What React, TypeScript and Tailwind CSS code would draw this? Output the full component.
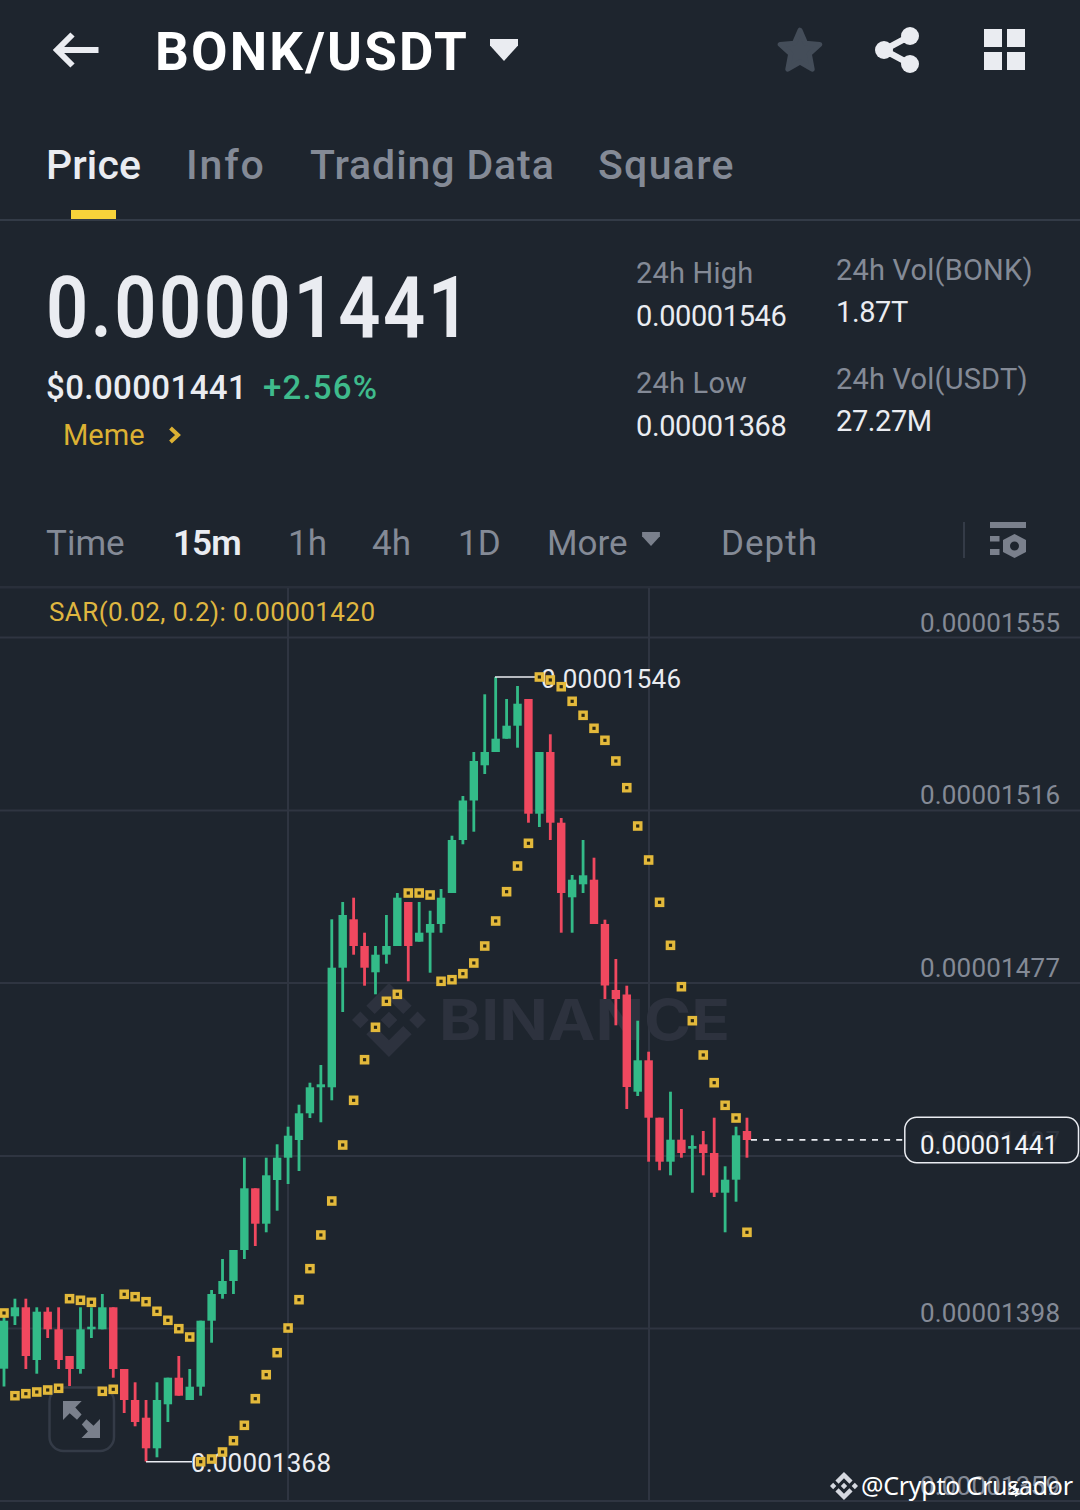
import React, { useState } from 'react'
import { SiBinance } from 'react-icons/si'
import clsx from 'clsx'

interface Candle {
  up: boolean
  high: number
  top: number
  bottom: number
  low: number
}

const UP = '#33bb88'
const DOWN = '#f0485f'
const FIRST_X = 4
const STEP = 10.926

// direction, wick top, body top, body bottom, wick bottom
const rawCandles: [number, number, number, number, number][] = [
  [1, 1316, 1320.7, 1368.7, 1386.5],
  [1, 1298.7, 1307.3, 1316.3, 1325],
  [0, 1298.7, 1307.3, 1356, 1369],
  [1, 1307.3, 1311.7, 1360, 1373.7],
  [0, 1307.3, 1311.7, 1329.3, 1338],
  [0, 1307.3, 1329.3, 1360, 1369],
  [0, 1356, 1356, 1369, 1386],
  [1, 1307.3, 1329.3, 1369, 1373.7],
  [1, 1307.3, 1326.7, 1329.3, 1338],
  [1, 1294, 1307.3, 1329.3, 1329.3],
  [0, 1307.3, 1307.3, 1369, 1377.7],
  [0, 1369, 1369, 1400, 1413],
  [0, 1382.3, 1400, 1422, 1426.3],
  [0, 1400, 1417.7, 1448.3, 1461.5],
  [1, 1382.3, 1400, 1448.3, 1457.3],
  [1, 1377.7, 1377.7, 1404.3, 1422],
  [0, 1356, 1377.7, 1395.7, 1395.7],
  [1, 1369, 1386.7, 1400, 1400],
  [1, 1320.7, 1320.7, 1386.7, 1395.7],
  [1, 1290, 1294, 1320.7, 1342.7],
  [1, 1259, 1281, 1294, 1298.7],
  [1, 1250, 1250, 1281, 1294],
  [1, 1157.7, 1188.3, 1250, 1259],
  [0, 1188.3, 1188.3, 1223.7, 1246],
  [1, 1157.7, 1175.3, 1223.7, 1232.3],
  [1, 1144.3, 1157.7, 1180, 1210.7],
  [1, 1126.7, 1135.7, 1157.7, 1184],
  [1, 1104.7, 1113.3, 1140, 1171],
  [1, 1082.7, 1087.3, 1113.3, 1118],
  [1, 1065, 1084.3, 1087.3, 1122.3],
  [1, 919.3, 967.7, 1087.3, 1100.3],
  [1, 902, 915, 967.7, 1012],
  [0, 897.7, 919.3, 946, 954.7],
  [0, 932.7, 946, 967.7, 985.7],
  [1, 946, 954.7, 972.3, 994.3],
  [1, 915, 946, 954.7, 963.7],
  [1, 893, 897.7, 946, 946],
  [0, 902, 902, 946, 981.3],
  [1, 902, 932.7, 941.7, 941.7],
  [1, 910.7, 924, 932.7, 972.7],
  [1, 889, 897.7, 924, 932.7],
  [1, 835.7, 840, 893, 893],
  [1, 796, 800.5, 840, 844.3],
  [1, 752, 761, 800.5, 831.7],
  [1, 694.3, 752, 765.3, 774],
  [1, 677, 738.7, 752, 752],
  [1, 699, 725.7, 738.7, 738.7],
  [1, 686, 703.7, 725.7, 747.7],
  [0, 699, 699, 813.7, 822.7],
  [1, 752, 752, 813.7, 827],
  [0, 734.3, 752, 822.7, 840],
  [0, 818, 822.7, 893, 932.7],
  [1, 875, 879.7, 897.3, 932.7],
  [1, 840, 875.3, 884.3, 893],
  [0, 857.7, 879.7, 924, 924],
  [0, 919.7, 924, 985.5, 999],
  [0, 959, 990, 999, 1025.3],
  [0, 985.7, 994.5, 1087, 1109],
  [1, 1020.7, 1060.3, 1091.7, 1096],
  [0, 1051.7, 1060.3, 1117.7, 1161.7],
  [0, 1117.7, 1117.7, 1161.7, 1170.3],
  [1, 1091.7, 1139.7, 1161.7, 1175.3],
  [0, 1109, 1139.7, 1153, 1157.7],
  [1, 1135.3, 1146, 1148.7, 1192.7],
  [0, 1131, 1144.3, 1153, 1175.3],
  [0, 1117.7, 1153, 1192.7, 1197],
  [1, 1166.3, 1179.7, 1192.7, 1232.3],
  [1, 1126.7, 1135.3, 1179.7, 1201.7],
  [0, 1117.7, 1131, 1140, 1157.7]
]

const candles: Candle[] = rawCandles.map(([up, high, top, bottom, low]) => ({ up: up === 1, high, top, bottom, low }))

const sar = [
  1313, 1395.7, 1393.7, 1392, 1390, 1388.3, 1298.7, 1300.3, 1302.3, 1391.3, 1389.3, 1294.3, 1296.7, 1301.7, 1311.3,
  1320.3, 1328.7, 1337, 1461.7, 1459, 1452, 1440.7, 1425.3, 1398.7, 1374.7, 1352.7, 1328, 1299.7, 1268.7, 1235, 1201,
  1145, 1100.3, 1059.7, 1027.3, 1001.3, 994.3, 893, 893, 895, 981.3, 979.7, 973.7, 963, 946, 921, 891.7, 866, 843.3,
  677, 680, 686.7, 701.3, 715.3, 728.3, 740.3, 761, 787.7, 826, 860, 902.3, 945.3, 986.7, 1020.7, 1055, 1082.7,
  1105.3, 1118, 1232.3
]

const gridRows = [637.5, 810.5, 983, 1156, 1328.5, 1501]
const gridColumns = [288, 649]

const axisLabels = [
  { text: '0.00001555', y: 632 },
  { text: '0.00001516', y: 804 },
  { text: '0.00001477', y: 977 },
  { text: '0.00001398', y: 1322 },
  { text: '0.00001359', y: 1494.5 }
]

const tabs = [
  { name: 'Price', width: 'w-[94px]', tracking: 'tracking-[0.1px]' },
  { name: 'Info', width: 'w-[78px]', tracking: 'tracking-[1.9px]' },
  { name: 'Trading Data', width: 'w-[242px]', tracking: 'tracking-[0.9px]' },
  { name: 'Square', width: 'w-[136px]', tracking: 'tracking-[1.3px]' }
]

const intervals = [
  { name: 'Time', width: 'w-[127px]' },
  { name: '15m', width: 'w-[115px]' },
  { name: '1h', width: 'w-[84px]' },
  { name: '4h', width: 'w-[86px]' },
  { name: '1D', width: 'w-[89px]' }
]

const Caret: React.FC<{ className?: string }> = ({ className }) => (
  <svg viewBox="0 0 28 22" className={className} fill="currentColor">
    <path d="M0 0H28V6.5L14 22L0 6.5Z" />
  </svg>
)

const Header: React.FC = () => (
  <header className="flex h-[99px] items-center pl-[52px] pr-[55px]">
    <svg viewBox="0 0 48 36" className="h-9 w-12" fill="none" stroke="#eaecf1" strokeWidth="6">
      <path d="M20.5 2.5L5 18L20.5 33.5M4 18H46.5" />
    </svg>
    <h1 className="ml-[55px] w-[335px] pt-[5px] text-[53px] leading-[60px] font-bold tracking-[2.2px] whitespace-nowrap text-white">
      BONK/USDT
    </h1>
    <Caret className="h-[22px] w-7 shrink-0 text-[#eaecf1]" />
    <div className="ml-auto flex items-center">
      <svg viewBox="0 0 46 48" className="h-12 w-[46px]" fill="#444d59" stroke="#444d59" strokeWidth="5" strokeLinejoin="round">
        <path d="M23 4.2L28.6 17.2L42.8 18.4L32.3 27.8L35.2 43.2L23 36L10.8 43.2L13.7 27.8L3.2 18.4L17.4 17.2Z" />
      </svg>
      <svg viewBox="0 0 44 48" className="ml-[52px] h-12 w-11" fill="#eaecf1">
        <path d="M35 10L9 24L35 38" fill="none" stroke="#eaecf1" strokeWidth="6.5" />
        <circle cx="35" cy="10" r="9" />
        <circle cx="9" cy="24" r="9" />
        <circle cx="35" cy="38" r="9" />
      </svg>
      <div className="ml-[65px] grid grid-cols-2 gap-[5px]">
        {[0, 1, 2, 3].map((n) => (
          <span key={n} className="h-[18px] w-[18px] bg-[#eaecf1]" />
        ))}
      </div>
    </div>
  </header>
)

const Stat: React.FC<{ label: string; value: string; className: string }> = ({ label, value, className }) => (
  <div className={clsx('text-[29px] whitespace-nowrap', className)}>
    <div className="tracking-[0.2px] text-[#848a96]">{label}</div>
    <div className="tracking-[-0.4px] text-[#eaecf1]">{value}</div>
  </div>
)

const Summary: React.FC = () => (
  <section className="flex h-[279px] pl-[46px]">
    <div className="w-[590px] pt-[45px]">
      <div className="origin-left scale-x-[0.87] text-[85px] leading-[84px] font-semibold tracking-[2.9px] text-[#eaecf1]">
        0.00001441
      </div>
      <div className="mt-[18px] flex text-[33px] leading-10 font-medium">
        <span className="w-[217px] tracking-[0.4px] text-[#eaecf1]">$0.00001441</span>
        <span className="tracking-[1.2px] text-[#3fbb8c]">+2.56%</span>
      </div>
      <div className="mt-[11px] flex items-center pl-[17px] text-[29px] leading-8 text-[#dcb133]">
        <span className="w-[106px]">Meme</span>
        <svg viewBox="0 0 12 18" className="h-[18px] w-3" fill="none" stroke="currentColor" strokeWidth="4">
          <path d="M1.5 2L9 9L1.5 16" />
        </svg>
      </div>
    </div>
    <div className="flex w-[200px] flex-col gap-6 pt-[31px]">
      <Stat label="24h High" value="0.00001546" className="leading-[43px]" />
      <Stat label="24h Low" value="0.00001368" className="leading-[43px]" />
    </div>
    <div className="flex flex-col gap-[25px] pt-[28px]">
      <Stat label="24h Vol(BONK)" value="1.87T" className="leading-[42px]" />
      <Stat label="24h Vol(USDT)" value="27.27M" className="leading-[42px]" />
    </div>
  </section>
)

const Chart: React.FC = () => (
  <svg viewBox="0 586 1080 924" className="block h-[924px] w-[1080px]" fontSize="26">
    <g stroke="#2f3541" strokeWidth="2">
      <path d="M0 587H1080" stroke="#292f3a" strokeWidth="3" />
      {gridRows.map((y) => (
        <path key={y} d={`M0 ${y}H1080`} />
      ))}
      {gridColumns.map((x) => (
        <path key={x} d={`M${x} 588V1501`} />
      ))}
    </g>

    {/* Watermark */}
    <g fill="#2d323e" color="#2d323e">
      <SiBinance x={352} y={983} size={74} />
      <text
        x="439"
        y="1040"
        fontSize="56"
        fontWeight="700"
        fontFamily="Inter, sans-serif"
        textLength="291"
        lengthAdjust="spacingAndGlyphs"
      >
        BINANCE
      </text>
    </g>

    {/* Price axis */}
    <g fill="#848a96">
      {axisLabels.map(({ text, y }) => (
        <text key={text} x="920" y={y} textLength="140">
          {text}
        </text>
      ))}
    </g>
    <text x="49" y="621" fontSize="26" fill="#dfb640" textLength="326">
      SAR(0.02, 0.2): 0.00001420
    </text>

    {/* Expand button */}
    <rect x="49.5" y="1387.5" width="64.5" height="63.5" rx="14" fill="none" stroke="#343b47" strokeWidth="2.5" />
    <g fill="#7a808c">
      <path d="M63 1401H81.7L75.3 1407.6L81.6 1414.6L77 1419.8L69.7 1413.3L63 1420Z" />
      <path d="M100 1438H81.5L87.9 1431.4L81.8 1424.4L86.4 1419.2L93.5 1425.7L100 1419Z" />
    </g>

    {candles.map((c, i) => {
      const x = FIRST_X + i * STEP
      return (
        <g key={i} fill={c.up ? UP : DOWN}>
          <rect x={x - 1.4} y={c.high} width="2.8" height={c.low - c.high} />
          <rect x={x - 4.2} y={c.top} width="8.4" height={c.bottom - c.top} />
        </g>
      )
    })}

    {/* High / low callouts */}
    <path d="M495 677H541M146 1461.7H192" stroke="#eaecf1" strokeWidth="1.6" />
    <g fill="#eaecf1">
      <text x="541" y="688" textLength="140">
        0.00001546
      </text>
      <text x="191" y="1472" textLength="140">
        0.00001368
      </text>
    </g>

    {sar.map((y, i) => (
      <rect
        key={i}
        x={FIRST_X + i * STEP - 3.2}
        y={y - 3.2}
        width="6.4"
        height="6.4"
        fill="#2b2713"
        stroke="#e3b93b"
        strokeWidth="3.2"
      />
    ))}

    {/* Last price */}
    <path d="M751 1139.8H904" stroke="#eaecf1" strokeWidth="1.7" strokeDasharray="6 6.1" />
    <rect x="904.8" y="1117.3" width="173.7" height="45.4" rx="12" fill="#1e252e" stroke="#eaecf1" strokeWidth="1.5" />
    <text x="920" y="1149.5" fill="#2d343f" textLength="140">
      0.00001437
    </text>
    <text x="920" y="1154" fill="#f3f5f9" textLength="138">
      0.00001441
    </text>

    {/* Author mark */}
    <g color="#d6d9e0">
      <SiBinance x={830} y={1472} size={28} />
    </g>
    <text x="861" y="1495" fontSize="25" fill="#ffffff" fontFamily="'Noto Sans', sans-serif" textLength="212">
      @Crypto Crusador
    </text>
    <path d="M1009 1490L1016 1484L1014 1489H1019L1011 1493L1019 1494L1015 1496" fill="none" stroke="#ffffff" strokeWidth="1.5" />
  </svg>
)

export default function App() {
  const [tab, setTab] = useState('Price')
  const [interval, setInterval] = useState('15m')

  return (
    <div className="h-[1510px] w-[1080px] overflow-hidden bg-[#1e252e] font-['Roboto',sans-serif]">
      <Header />

      <nav className="flex h-[122px] gap-[46px] border-b-2 border-[#333b47] pl-[46px]">
        {tabs.map(({ name, width, tracking }) => (
          <button
            key={name}
            onClick={() => setTab(name)}
            className={clsx(
              'relative pt-[13px] text-left text-[41px] font-medium whitespace-nowrap',
              width,
              tracking,
              tab === name ? 'text-[#eaecf1]' : 'text-[#848a96]'
            )}
          >
            {name}
            {tab === name && <span className="absolute bottom-0 left-[25px] h-[9px] w-[45px] bg-[#f8d33a]" />}
          </button>
        ))}
      </nav>

      <Summary />

      <div className="flex h-[86px] items-center pl-[46px] text-[35px] text-[#848a96]">
        {intervals.map(({ name, width }) => (
          <button
            key={name}
            onClick={() => setInterval(name)}
            className={clsx('pt-[2px] text-left', width, interval === name && 'font-semibold tracking-[-0.9px] text-[#eaecf1]')}
          >
            {name}
          </button>
        ))}
        <button className="flex w-[174px] items-center">
          <span className="w-[95px] pt-[2px] text-left">More</span>
          <Caret className="mb-2 h-[14px] w-[18px] text-[#7a808c]" />
        </button>
        <button className="w-[242px] pt-[2px] text-left tracking-[1px]">Depth</button>
        <span className="mb-[6px] h-9 w-[2px] bg-[#343b47]" />
        <svg viewBox="0 0 36 36" className="mb-[6px] ml-[25px] h-9 w-9" fill="#7a808c">
          <path d="M0 0H36V6H0ZM0 14H9.5V19.5H0ZM0 27H9.5V33H0Z" />
          <path
            fillRule="evenodd"
            d="M24.5 12L36 18V30L24.5 36L13 30V18ZM24.5 19.5A4.5 4.5 0 1 0 24.5 28.5A4.5 4.5 0 1 0 24.5 19.5Z"
          />
        </svg>
      </div>

      <Chart />
    </div>
  )
}
